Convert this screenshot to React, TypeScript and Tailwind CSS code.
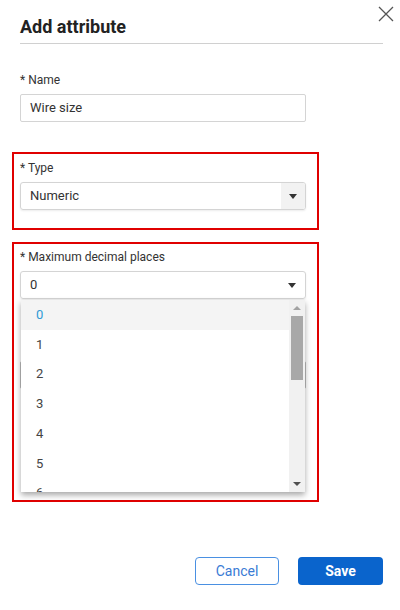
import React from "react";

const Caret = ({ color = "#333" }: { color?: string }) => (
  <svg width="8" height="5" viewBox="0 0 8 5">
    <path d="M0 0 L8 0 L4 5 Z" fill={color} />
  </svg>
);

export default function App() {
  const items = ["0", "1", "2", "3", "4", "5", "6"];
  return (
    <div className="relative w-[400px] h-[610px] bg-white font-['Roboto',sans-serif] text-[#333]">
      <button className="absolute top-[6px] right-[6px] w-[16px] h-[16px] flex items-center justify-center">
        <svg width="16" height="16" viewBox="0 0 16 16">
          <path d="M1 1 L15 15 M15 1 L1 15" stroke="#555" strokeWidth="1.3" fill="none" />
        </svg>
      </button>

      <div className="pt-[15px] px-[20px]">
        <h1 className="text-[18px] leading-[24px] font-bold text-[#222]">Add attribute</h1>
        <div className="mt-[4px] h-px w-[363px] bg-[#d0d0d0]" />
      </div>

      <div className="px-[20px] mt-[28px]">
        <div className="text-[12px] leading-[16px] text-[#333]">* Name</div>
        <div className="mt-[6px] w-[286px] h-[28px] border border-[#d4d4d4] rounded-[2px] flex items-center pl-[9px] text-[13px] text-[#333]">
          Wire size
        </div>
      </div>

      <div className="mt-[30px] mx-[12px] w-[307px] border-2 border-[#e00000] pt-[6px] px-[6px] pb-[18px]">
        <div className="text-[12px] leading-[16px] text-[#333]">* Type</div>
        <div className="mt-[6px] w-[286px] h-[28px] border border-[#d4d4d4] rounded-[3px] shadow-[0_1px_2px_rgba(0,0,0,0.08)] flex items-stretch overflow-hidden">
          <div className="flex-1 flex items-center pl-[9px] text-[13px] text-[#333]">Numeric</div>
          <div className="w-[24px] bg-[#f2f2f2] flex items-center justify-center">
            <Caret />
          </div>
        </div>
      </div>

      <div className="relative mt-[12px] mx-[12px] w-[307px] h-[260px] border-2 border-[#e00000] pt-[5px] px-[6px]">
        <div className="text-[12px] leading-[16px] text-[#333]">* Maximum decimal places</div>
        <div className="relative mt-[6px] w-[286px]">
          <div className="h-[28px] border border-[#d4d4d4] rounded-[3px] shadow-[0_1px_2px_rgba(0,0,0,0.08)] flex items-center justify-between pl-[9px] pr-[9px] text-[13px] text-[#333]">
            <span>0</span>
            <Caret />
          </div>
          <div className="mt-[62px] h-[28px] border border-[#bdbdbd] rounded-[2px]" />

          <div className="absolute left-[1px] top-[29px] w-[284px] h-[192px] bg-white shadow-[0_3px_6px_rgba(0,0,0,0.35)] flex overflow-hidden z-10">
            <div className="flex-1 overflow-hidden">
              {items.map((v, i) => (
                <div
                  key={v}
                  className={
                    i === 0
                      ? "h-[29.7px] flex items-center pl-[15px] text-[13px] bg-[#f4f4f4] text-[#2f9bd6]"
                      : "h-[29.7px] flex items-center pl-[15px] text-[13px] text-[#444]"
                  }
                >
                  {v}
                </div>
              ))}
            </div>
            <div className="w-[16px] bg-[#f1f1f1] flex flex-col items-center">
              <div className="h-[16px] flex items-center justify-center">
                <svg width="8" height="4" viewBox="0 0 8 4">
                  <path d="M0 4 L8 4 L4 0 Z" fill="#a3a3a3" />
                </svg>
              </div>
              <div className="w-[12px] h-[64px] bg-[#a8a8a8]" />
              <div className="flex-1" />
              <div className="h-[16px] flex items-center justify-center">
                <svg width="8" height="4" viewBox="0 0 8 4">
                  <path d="M0 0 L8 0 L4 4 Z" fill="#505050" />
                </svg>
              </div>
            </div>
          </div>
        </div>
      </div>

      <div className="mt-[55px] flex justify-end gap-[19px] pr-[17px]">
        <button className="w-[84px] h-[28px] border border-[#4a90e2] rounded-[4px] text-[14px] text-[#3a7bd5] bg-white">
          Cancel
        </button>
        <button className="w-[85px] h-[28px] rounded-[4px] text-[14px] font-bold text-white bg-[#0a64cc]">
          Save
        </button>
      </div>
    </div>
  );
}
